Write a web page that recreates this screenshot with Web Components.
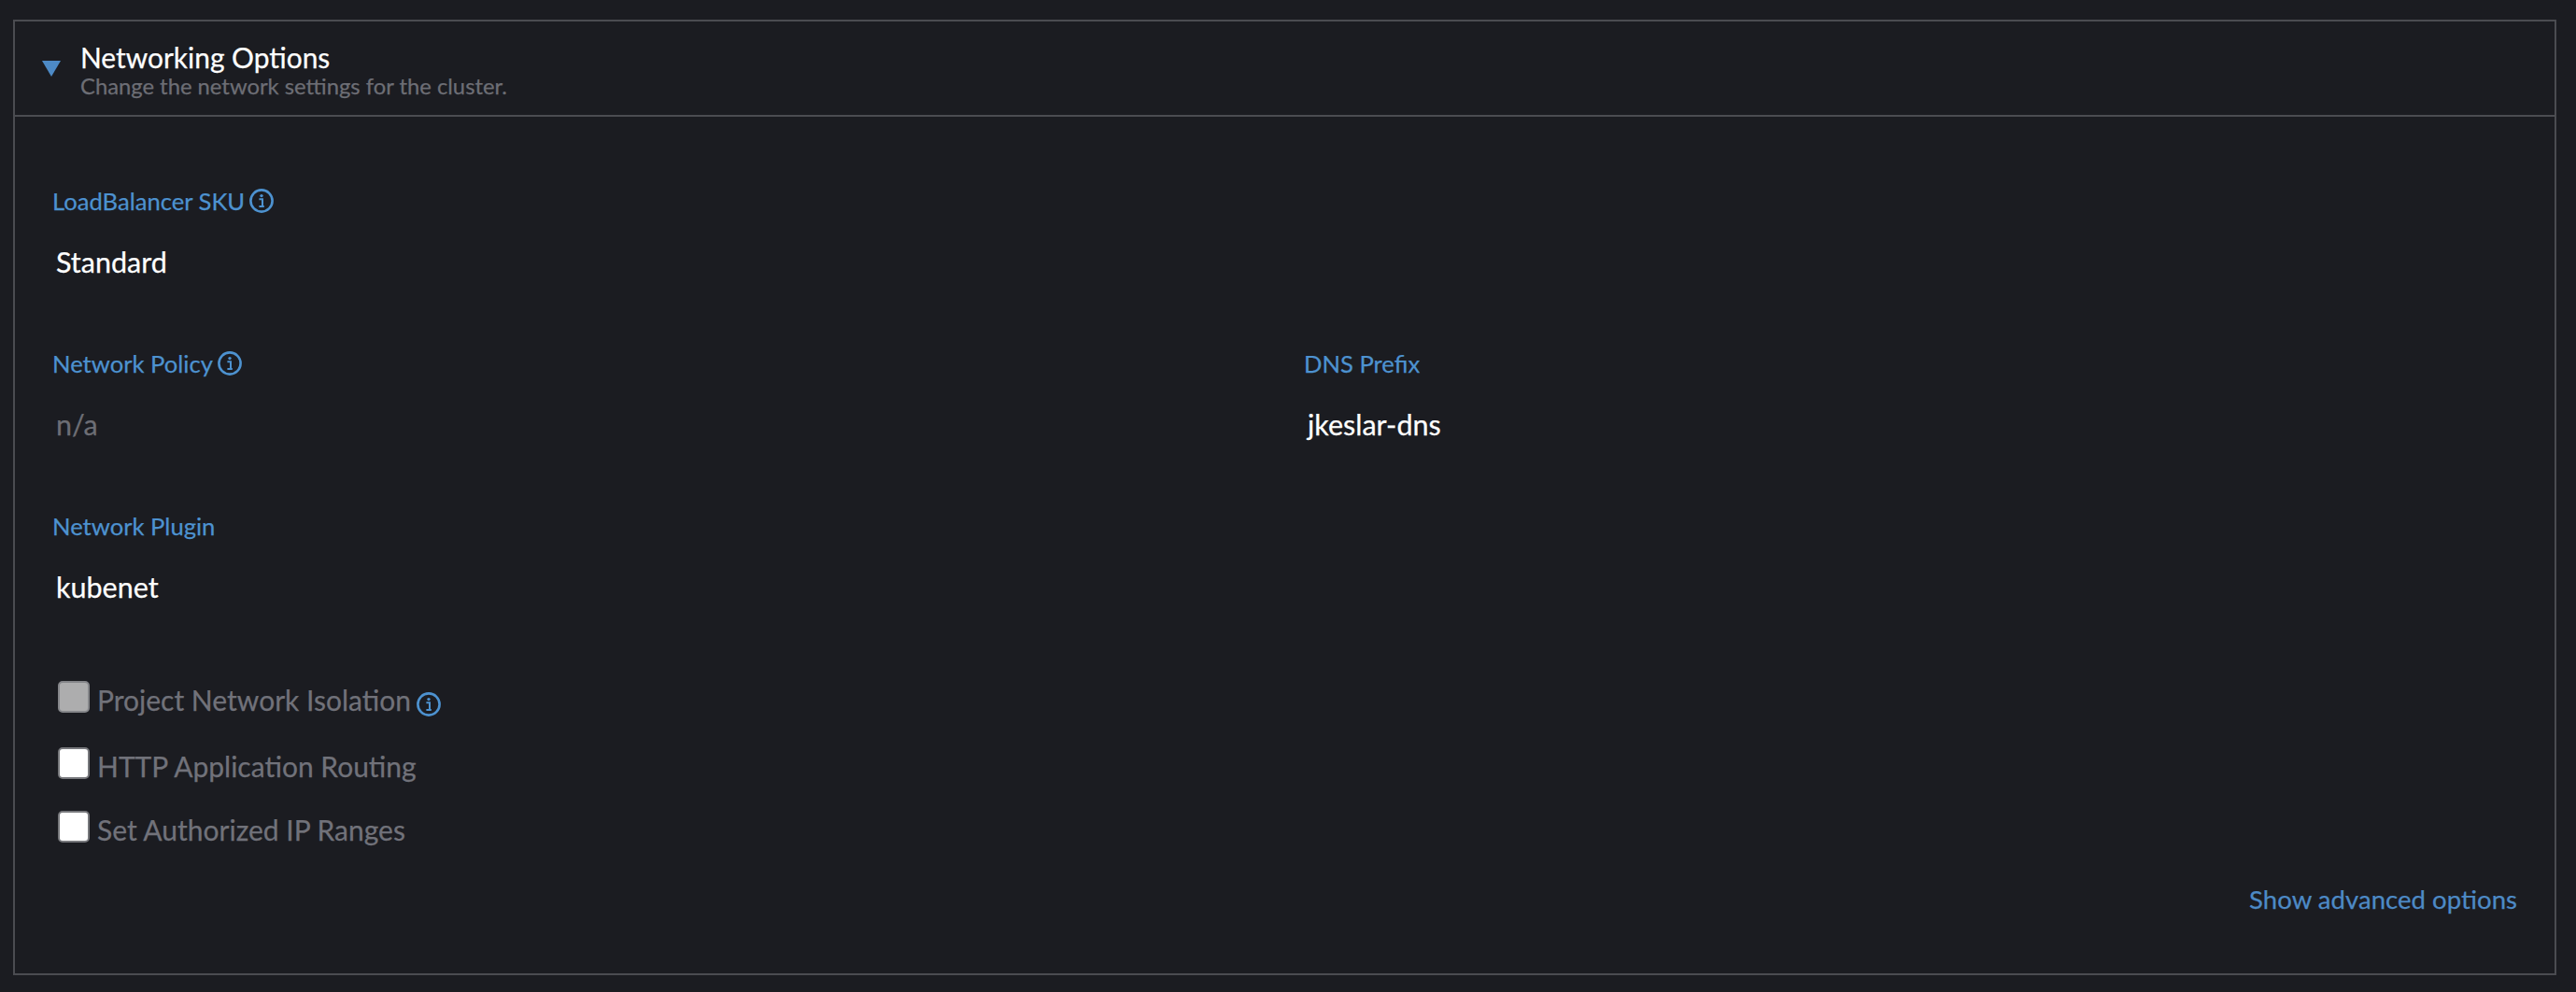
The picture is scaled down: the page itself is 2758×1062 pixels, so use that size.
<!DOCTYPE html>
<html>
<head>
<meta charset="utf-8">
<style>
  html, body { margin: 0; background: #1b1c21; }
  body { padding: 21px 21px 18px 14px; font-family: Lato, "Open Sans", sans-serif; -webkit-text-stroke: 0.25px currentColor; }
  * { box-sizing: border-box; }
</style>
</head>
<body>
<options-panel heading="Networking Options" description="Change the network settings for the cluster.">
  <field-grid>
    <value-field label="LoadBalancer SKU" value="Standard" info></value-field>
    <span></span>
    <value-field label="Network Policy" value="n/a" info muted></value-field>
    <value-field label="DNS Prefix" value="jkeslar-dns"></value-field>
    <value-field label="Network Plugin" value="kubenet"></value-field>
  </field-grid>
  <check-list>
    <check-row label="Project Network Isolation" disabled info></check-row>
    <check-row label="HTTP Application Routing"></check-row>
    <check-row label="Set Authorized IP Ranges"></check-row>
  </check-list>
  <advanced-link>Show advanced options</advanced-link>
</options-panel>

<script>
class InfoIcon extends HTMLElement {
  constructor() {
    super();
    this.attachShadow({ mode: "open" });
    this.shadowRoot.innerHTML = `
      <style>
        :host { display: inline-block; width: 26px; height: 26px; flex: none; }
        svg { display: block; width: 26px; height: 26px; }
      </style>
      <svg viewBox="0 0 26 26" fill="none">
        <circle cx="13" cy="13" r="11.6" stroke="#4d92d0" stroke-width="2.6"/>
        <circle cx="13" cy="7.6" r="1.7" fill="#4d92d0"/>
        <path d="M10.4 11.2h3.6v7.6M10.4 19h5.4" stroke="#4d92d0" stroke-width="2"/>
      </svg>
    `;
  }
}

class OptionsPanel extends HTMLElement {
  constructor() {
    super();
    this.attachShadow({ mode: "open" });
  }

  connectedCallback() {
    this.shadowRoot.innerHTML = `
      <style>
        :host { display: block; border: 2px solid #4b4c51; height: 1023px; }
        .head { display: flex; height: 100px; padding: 0 0 0 29px; border-bottom: 2px solid #4b4c51; }
        .arrow { width: 0; height: 0; margin: 42px 21px 0 0; border-style: solid; border-width: 17px 10.5px 0; border-color: #4d8ac6 transparent transparent; }
        .text { padding-top: 21px; }
        .title { color: #fff; font-size: 29.9px; line-height: 35px; }
        .desc { color: #6d6e75; font-size: 23.8px; line-height: 26px; }
        .body { padding: 75px 40px 0 40px; }
      </style>
      <div class="head">
        <div class="arrow"></div>
        <div class="text">
          <div class="title">${this.getAttribute("heading")}</div>
          <div class="desc">${this.getAttribute("description")}</div>
        </div>
      </div>
      <div class="body"><slot></slot></div>
    `;
  }
}

class FieldGrid extends HTMLElement {
  constructor() {
    super();
    this.attachShadow({ mode: "open" });
    this.shadowRoot.innerHTML = `
      <style>
        :host { display: grid; grid-template-columns: 1340px 1fr; grid-auto-rows: 174px; }
      </style>
      <slot></slot>
    `;
  }
}

class ValueField extends HTMLElement {
  constructor() {
    super();
    this.attachShadow({ mode: "open" });
  }

  connectedCallback() {
    const info = this.hasAttribute("info") ? "<info-icon></info-icon>" : "";
    this.shadowRoot.innerHTML = `
      <style>
        :host { display: block; }
        .label { display: flex; align-items: center; gap: 5px; height: 30px; color: #4d92d0; font-size: 25.6px; line-height: 30px; }
        .value { padding: 32px 0 0 4px; color: #fff; font-size: 30.5px; line-height: 36px; }
        :host([muted]) .value { color: #6d6e75; }
      </style>
      <div class="label"><span>${this.getAttribute("label")}</span>${info}</div>
      <div class="value">${this.getAttribute("value")}</div>
    `;
  }
}

class CheckList extends HTMLElement {
  constructor() {
    super();
    this.attachShadow({ mode: "open" });
    this.shadowRoot.innerHTML = `
      <style>
        :host { display: block; padding: 7px 0 0 6px; }
      </style>
      <slot></slot>
    `;
  }
}

class CheckRow extends HTMLElement {
  constructor() {
    super();
    this.attachShadow({ mode: "open" });
  }

  connectedCallback() {
    const info = this.hasAttribute("info") ? "<info-icon></info-icon>" : "";
    this.shadowRoot.innerHTML = `
      <style>
        :host { display: flex; height: 68px; color: #71727a; font-size: 30px; line-height: 36px; }
        :host([disabled]) { height: 71px; }
        .box { width: 30px; height: 30px; margin-right: 8px; border: 2px solid #77787c; border-radius: 5px; background: #fff; flex: none; }
        :host([disabled]) .box { background: #adadae; border-color: #85868a; }
        .text { display: flex; gap: 6px; margin-top: 2px; }
        info-icon { margin-top: 10px; }
      </style>
      <div class="box"></div>
      <div class="text"><span>${this.getAttribute("label")}</span>${info}</div>
    `;
  }
}

class AdvancedLink extends HTMLElement {
  constructor() {
    super();
    this.attachShadow({ mode: "open" });
    this.shadowRoot.innerHTML = `
      <style>
        :host { display: block; margin-top: 9px; text-align: right; color: #4d8ac6; font-size: 27.6px; line-height: 36px; }
      </style>
      <slot></slot>
    `;
  }
}

customElements.define("info-icon", InfoIcon);
customElements.define("options-panel", OptionsPanel);
customElements.define("field-grid", FieldGrid);
customElements.define("value-field", ValueField);
customElements.define("check-list", CheckList);
customElements.define("check-row", CheckRow);
customElements.define("advanced-link", AdvancedLink);
</script>
</body>
</html>
